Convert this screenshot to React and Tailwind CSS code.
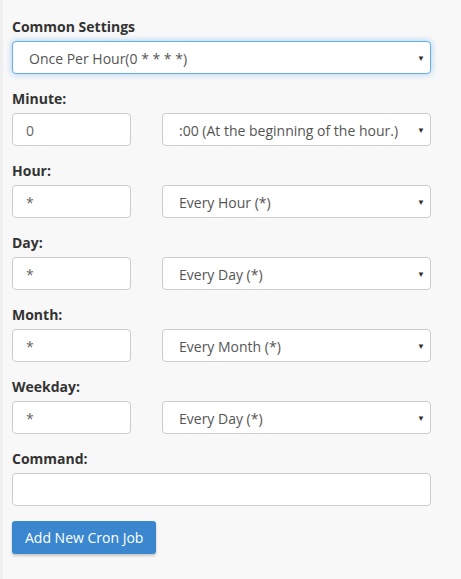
const FIELDS = [
  { label: 'Minute:', value: '0', option: ':00 (At the beginning of the hour.)' },
  { label: 'Hour:', value: '*', option: 'Every Hour (*)' },
  { label: 'Day:', value: '*', option: 'Every Day (*)' },
  { label: 'Month:', value: '*', option: 'Every Month (*)' },
  { label: 'Weekday:', value: '*', option: 'Every Day (*)' },
];

function Caret() {
  return <span className="absolute right-[5px] top-1/2 -translate-y-1/2 text-[8px] text-[#333]">▼</span>;
}

function FakeSelect({ text, focused, className = '' }) {
  return (
    <div
      className={`relative h-[33px] flex items-center rounded-[4px] border bg-white pl-4 pt-px text-[14px] text-[#555] ${
        focused ? 'border-[#66afe9] shadow-[0_0_6px_rgba(102,175,233,0.6)]' : 'border-[#ccc]'
      } ${className}`}
    >
      {text}
      <Caret />
    </div>
  );
}

export default function App() {
  return (
    <div
      className="w-[461px] h-[579px] bg-[#f8f8f8] border-l-[3px] border-[#efefef] pl-[9px] pr-[30px] pt-[17px]"
      style={{ fontFamily: '"Open Sans", sans-serif' }}
    >
      <label className="block text-[14px] font-bold text-[#333] leading-[20px] mb-[4px]">Common Settings</label>
      <FakeSelect text="Once Per Hour(0 * * * *)" focused />

      {FIELDS.map((f) => (
        <div key={f.label} className="mt-[15px]">
          <label className="block text-[14px] font-bold text-[#333] leading-[20px] mb-[4px]">{f.label}</label>
          <div className="flex gap-[31px]">
            <div className="w-[119px] h-[33px] flex items-center rounded-[4px] border border-[#ccc] bg-white pl-[13px] pt-px text-[14px] text-[#666]">
              {f.value}
            </div>
            <FakeSelect text={f.option} className="flex-1" />
          </div>
        </div>
      ))}

      <div className="mt-[15px]">
        <label className="block text-[14px] font-bold text-[#333] leading-[20px] mb-[4px]">Command:</label>
        <div className="h-[33px] rounded-[4px] border border-[#ccc] bg-white" />
      </div>

      <button className="mt-[15px] h-[33px] px-[13px] rounded-[3px] bg-[#3a87cf] text-white text-[14px] shadow-[0_2px_3px_rgba(0,0,0,0.2)]">
        Add New Cron Job
      </button>
    </div>
  );
}
